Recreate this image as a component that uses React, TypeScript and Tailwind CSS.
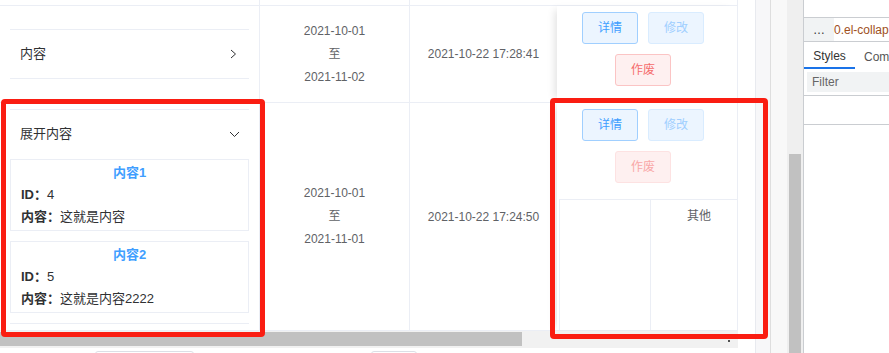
import React from "react";

const FONT = "font-['Liberation_Sans','Noto_Sans_CJK_SC',sans-serif]";

function ChevronRight() {
  return (
    <svg width="7" height="10" viewBox="0 0 7 10" fill="none">
      <path d="M1 1l4.5 4L1 9" stroke="#303133" strokeWidth="1" />
    </svg>
  );
}

function ChevronDown() {
  return (
    <svg width="11" height="7" viewBox="0 0 11 7" fill="none">
      <path d="M1 1l4.5 4.5L10 1" stroke="#303133" strokeWidth="1" />
    </svg>
  );
}

type Tone = "primary" | "primaryDisabled" | "danger" | "dangerDisabled";

const toneClass: Record<Tone, string> = {
  primary: "bg-[#ecf5ff] border-[#a0cfff] text-[#409eff]",
  primaryDisabled: "bg-[#ecf5ff] border-[#d9ecff] text-[#a0cfff]",
  danger: "bg-[#fef0f0] border-[#fbc4c4] text-[#f56c6c]",
  dangerDisabled: "bg-[#fef0f0] border-[#fde2e2] text-[#f9a7a7]",
};

function Btn({ label, tone }: { label: string; tone: Tone }) {
  return (
    <div
      className={`flex h-[32px] w-[56px] items-center justify-center rounded-[3px] border text-[12px] ${toneClass[tone]}`}
    >
      {label}
    </div>
  );
}

function Actions({ voidDisabled }: { voidDisabled?: boolean }) {
  return (
    <div className="pl-[25px]">
      <div className="flex gap-[10px]">
        <Btn label="详情" tone="primary" />
        <Btn label="修改" tone="primaryDisabled" />
      </div>
      <div className="mt-[10px] pl-[33px]">
        <Btn label="作废" tone={voidDisabled ? "dangerDisabled" : "danger"} />
      </div>
    </div>
  );
}

function Card({ title, id, text }: { title: string; id: number; text: string }) {
  return (
    <div className="border border-[#ebeef5] px-[10px] py-[2px] text-[13px] leading-[22px] text-[#303133]">
      <div className="text-center font-bold text-[#409eff]">{title}</div>
      <div>
        <span className="font-bold">ID：</span>
        {id}
      </div>
      <div>
        <span className="font-bold">内容：</span>
        {text}
      </div>
    </div>
  );
}

const fixedCol =
  "relative w-[181px] shrink-0 border-r border-[#ebeef5] bg-white shadow-[-6px_0_8px_-4px_rgba(0,0,0,0.12)]";

export default function App() {
  return (
    <div className={`relative flex h-[353px] w-[889px] overflow-hidden bg-white ${FONT}`}>
      {/* table */}
      <div className="flex w-[738px] shrink-0 flex-col overflow-hidden">
        {/* tail of previous row */}
        <div className="flex h-[6px] shrink-0 border-b border-[#ebeef5]">
          <div className="w-[260px] border-r border-[#ebeef5]" />
          <div className="w-[150px] border-r border-[#ebeef5]" />
          <div className="w-[147px]" />
          <div className={fixedCol} />
        </div>

        {/* row 1 */}
        <div className="flex h-[97px] shrink-0 border-b border-[#ebeef5]">
          <div className="flex w-[260px] items-center border-r border-[#ebeef5] px-[10px]">
            <div className="w-full border-y border-[#ebeef5]">
              <div className="flex h-[48px] items-center justify-between pl-[10px] pr-[12px] text-[13px] text-[#303133]">
                <span>内容</span>
                <ChevronRight />
              </div>
            </div>
          </div>
          <div className="flex w-[150px] flex-col items-center justify-center border-r border-[#ebeef5] text-[12px] leading-[23px] text-[#606266]">
            <div>2021-10-01</div>
            <div>至</div>
            <div>2021-11-02</div>
          </div>
          <div className="flex w-[147px] items-center justify-center text-[12px] text-[#606266]">
            2021-10-22 17:28:41
          </div>
          <div className={`${fixedCol} pt-[6px]`}>
            <Actions />
          </div>
        </div>

        {/* row 2 */}
        <div className="flex h-[228px] shrink-0 border-b border-[#ebeef5]">
          <div className="flex w-[260px] items-center border-r border-[#ebeef5] px-[10px]">
            <div className="w-full border-y border-[#ebeef5]">
              <div className="flex h-[48px] items-center justify-between pl-[10px] pr-[9px] text-[13px] text-[#303133]">
                <span>展开内容</span>
                <ChevronDown />
              </div>
              <div className="mt-[1px] flex flex-col gap-[10px] pb-[10px]">
                <Card title="内容1" id={4} text="这就是内容" />
                <Card title="内容2" id={5} text="这就是内容2222" />
              </div>
            </div>
          </div>
          <div className="flex w-[150px] flex-col items-center justify-center border-r border-[#ebeef5] text-[12px] leading-[23px] text-[#606266]">
            <div>2021-10-01</div>
            <div>至</div>
            <div>2021-11-01</div>
          </div>
          <div className="flex w-[147px] items-center justify-center text-[12px] text-[#606266]">
            2021-10-22 17:24:50
          </div>
          <div className={`${fixedCol} flex flex-col pt-[6px]`}>
            <Actions voidDisabled />
            <div className="mt-[16px] ml-[2px] flex flex-1 border-t border-l border-[#ebeef5]">
              <div className="w-[91px] border-r border-[#ebeef5]" />
              <div className="flex-1 pt-[6px] pl-[36px] text-[12px] leading-[20px] text-[#606266]">其他</div>
            </div>
          </div>
        </div>

        {/* horizontal scrollbar */}
        <div className="relative h-[17px] shrink-0 bg-[#f1f1f1] pt-[1px]">
          <div className="h-[14px] w-[522px] bg-[#c1c1c1]" />
          <div className="absolute right-[8px] top-[9px] h-[2px] w-[2px] bg-[#505050]" />
        </div>

        {/* next block */}
        <div className="flex shrink-0 items-start pt-[3px]">
          <div className="ml-[95px] h-[10px] w-[99px] rounded-[3px] border border-[#dcdfe6]" />
          <div className="ml-[177px] h-[10px] w-[46px] rounded-[3px] border border-[#dcdfe6]" />
        </div>
      </div>

      {/* page gutter + scrollbar */}
      <div className="w-[17px] shrink-0 bg-white" />
      <div className="w-[15px] shrink-0 border-l border-[#e8eaef] bg-[#f7f7f9]" />
      <div className="w-[17px] shrink-0 border-l border-[#dedede] bg-[#f8f8f8]" />
      <div className="w-[16px] shrink-0 bg-[#efefef] px-[2px] pt-[154px]">
        <div className="h-full w-full bg-[#c1c1c1]" />
      </div>

      {/* devtools */}
      <div className="flex w-[86px] shrink-0 flex-col overflow-hidden border-l border-[#cacdd1] font-['Liberation_Sans',sans-serif] text-[12px] text-[#333]">
        <div className="h-[18px] shrink-0 border-b border-[#cacdd1]" />
        <div className="flex h-[24px] shrink-0 items-center border-b border-[#cacdd1]">
          <div className="flex h-full w-[30px] shrink-0 items-center justify-center bg-[#f1f3f4] text-[#333]">…</div>
          <span className="whitespace-nowrap text-[#a0501c]">0.el-collap</span>
        </div>
        <div className="flex h-[27px] shrink-0 items-end whitespace-nowrap">
          <div className="flex h-full w-[51px] shrink-0 items-center justify-center border-b-2 border-[#1a73e8] pt-[2px]">
            Styles
          </div>
          <div className="flex h-full shrink-0 items-center pl-[9px] pt-[2px] text-[#555]">Com</div>
        </div>
        <div className="h-[27px] shrink-0 border-b border-[#cacdd1] pt-[3px] pl-[3px]">
          <div className="flex h-[20px] items-center bg-[#f1f3f4] pl-[5px] text-[#666]">Filter</div>
        </div>
        <div className="h-[29px] shrink-0 border-b border-[#cacdd1]" />
      </div>

      {/* red highlight boxes */}
      <div className="pointer-events-none absolute left-[1px] top-[99px] h-[238px] w-[264px] rounded-[4px] border-[5px] border-[#fa1d12]" />
      <div className="pointer-events-none absolute left-[550px] top-[98px] h-[241px] w-[218px] rounded-[4px] border-[5px] border-[#fa1d12]" />
    </div>
  );
}
